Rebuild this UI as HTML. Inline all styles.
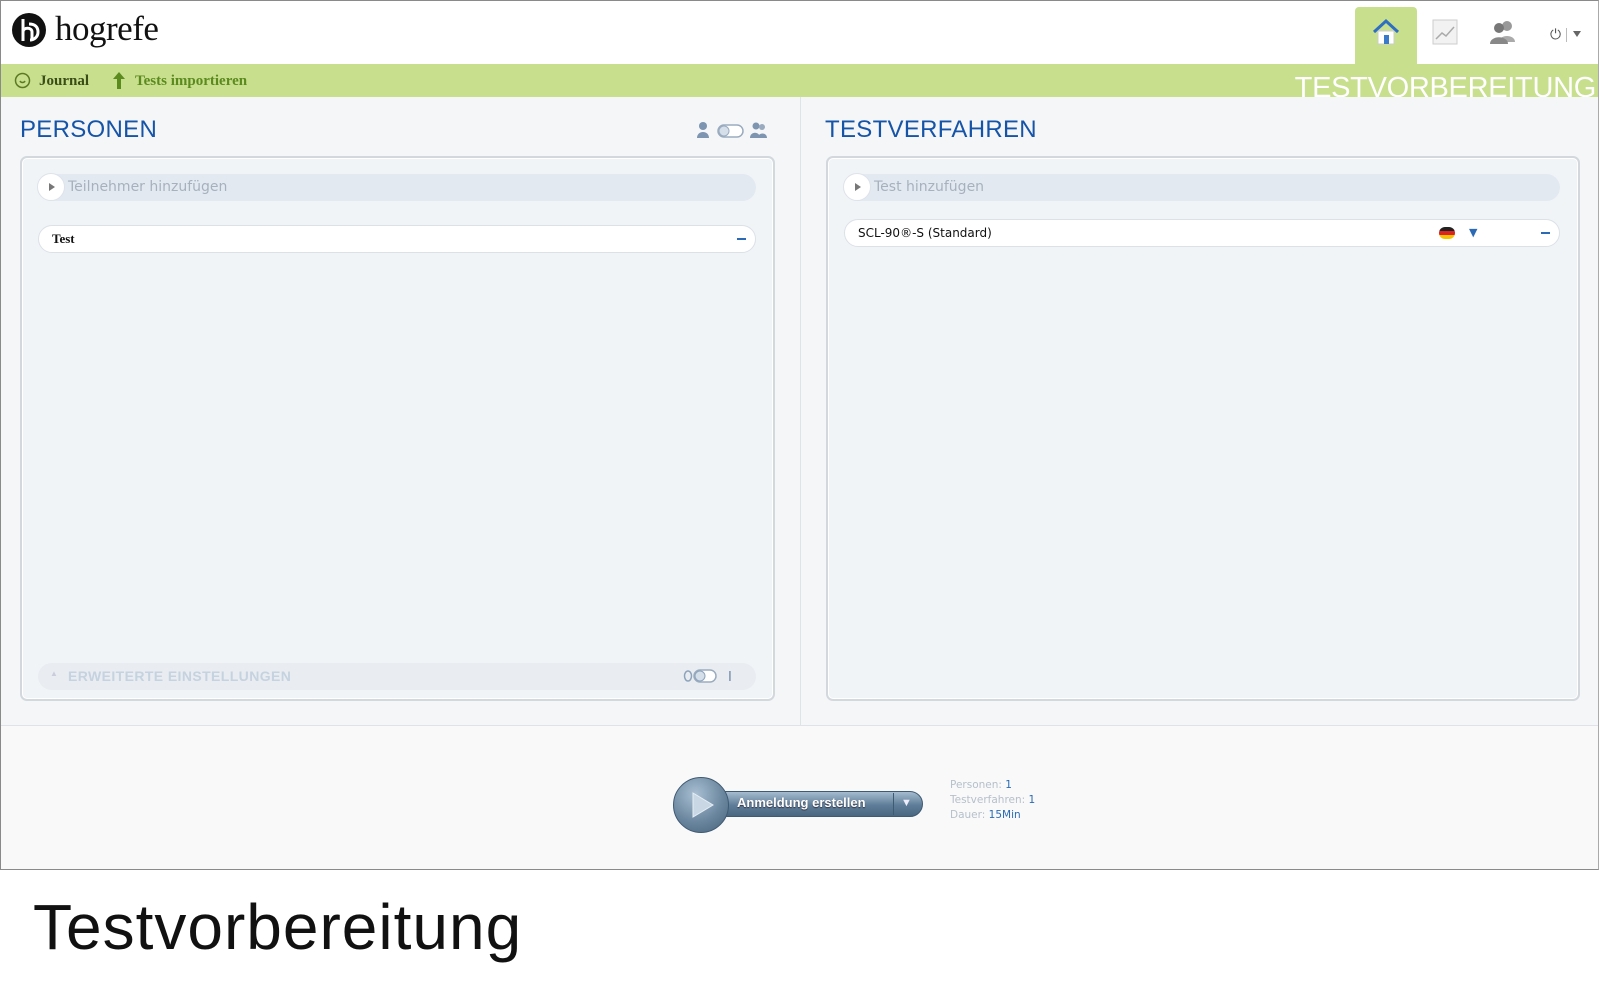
<!DOCTYPE html>
<html><head><meta charset="utf-8"><style>
*{margin:0;padding:0;box-sizing:border-box}
body{width:1599px;height:990px;background:#fff;font-family:"Liberation Sans",sans-serif;position:relative;overflow:hidden}
.a{position:absolute}
.frame{left:0;top:0;width:1599px;height:870px;border:1px solid #8a8a8a;border-right-color:#aaa;background:#f4f6f8}
.hdr{left:1px;top:1px;width:1597px;height:63px;background:#fff}
.bar{left:1px;top:64px;width:1597px;height:33px;background:#c8df8e;overflow:hidden}
.pbox{border:2px solid #d3d8dd;border-radius:7px;background:#f1f4f7;box-shadow:inset 0 0 0 1px #fff}
.add{height:27px;border-radius:14px;background:#e2e9f1;color:#a7b1bd;font-family:"DejaVu Sans",sans-serif;font-size:14px;line-height:27px;padding-left:30px}
.add .c{position:absolute;left:-1px;top:-1px;width:28px;height:28px;border-radius:50%;background:#fff;border:1px solid #dde3ea}
.add .c:after{content:"";position:absolute;left:11px;top:9px;border-left:6px solid #777;border-top:4px solid transparent;border-bottom:4px solid transparent}
.row{height:28px;border-radius:14px;background:#fff;border:1px solid #dbe1e7;font-size:13px;line-height:26px;padding-left:13px;color:#111}
.minus{position:absolute;right:9px;top:12px;width:9px;height:2px;background:#2b6bb5}
h2{position:absolute;font-weight:normal;font-size:24px;color:#1654a8;letter-spacing:.3px}
</style></head><body>
<div class="a frame"></div>
<div class="a hdr"></div>
<svg class="a" style="left:11px;top:12px" width="36" height="36" viewBox="0 0 36 36"><circle cx="18" cy="18" r="17" fill="#111"/><path d="M12 7v22M12 20c0-5 9-5 9 0v9M18 12c6 0 9 3 9 8s-4 8-8 8" stroke="#fff" stroke-width="3" fill="none"/></svg>
<div class="a" style="left:55px;top:9px;font-family:'Liberation Serif',serif;font-size:35px;color:#111;letter-spacing:-.5px">hogrefe</div>
<div class="a" style="left:1355px;top:7px;width:62px;height:58px;background:#c8df8e;border-radius:4px 4px 0 0"></div>
<svg class="a" style="left:1371px;top:18px" width="30" height="28" viewBox="0 0 30 28"><path d="M3 14L15 3l12 11" stroke="#2e6fc2" stroke-width="3" fill="none"/><rect x="7" y="13" width="16" height="13" fill="#fff" stroke="#ccc"/><rect x="13" y="17" width="5" height="9" fill="#3a7ac8"/></svg>
<svg class="a" style="left:1431px;top:18px" width="28" height="28" viewBox="0 0 28 28"><rect x="2" y="2" width="24" height="24" fill="#f2f2f2" stroke="#ccc"/><path d="M5 21l6-6 4 3 8-9" stroke="#aaa" stroke-width="1.5" fill="none"/></svg>
<svg class="a" style="left:1488px;top:18px" width="30" height="28" viewBox="0 0 30 28"><circle cx="19" cy="8" r="5" fill="#999"/><path d="M11 24c0-8 16-8 16 0z" fill="#aaa"/><circle cx="11" cy="10" r="5" fill="#777"/><path d="M2 26c0-9 18-9 18 0z" fill="#888"/></svg>
<div class="a" style="left:1550px;top:26px;font-size:14px;color:#555">⏻</div>
<div class="a" style="left:1566px;top:28px;width:1px;height:14px;background:#bbb"></div>
<div class="a" style="left:1573px;top:31px;border-top:6px solid #666;border-left:4px solid transparent;border-right:4px solid transparent"></div>
<div class="a bar">
 <svg class="a" style="left:13px;top:8px" width="17" height="17" viewBox="0 0 17 17"><circle cx="8.5" cy="8.5" r="7" stroke="#5b7a22" stroke-width="1.5" fill="none"/><path d="M6 9c1 2 4 2 5 0" stroke="#5b7a22" stroke-width="1.5" fill="none"/></svg>
 <div class="a" style="left:38px;top:9px;font-family:'Liberation Serif',serif;font-weight:bold;font-size:15px;color:#3b4d16">Journal</div>
 <svg class="a" style="left:111px;top:7px" width="14" height="19" viewBox="0 0 14 19"><path d="M7 1L1 8h4v10h4V8h4z" fill="#5b8a1e"/></svg>
 <div class="a" style="left:134px;top:9px;font-family:'Liberation Serif',serif;font-weight:bold;font-size:15px;color:#5b8a1e">Tests importieren</div>
 <div class="a" style="right:2px;top:8px;font-size:29px;color:#fff;letter-spacing:-.3px">TESTVORBEREITUNG</div>
</div>
<div class="a" style="left:800px;top:97px;width:1px;height:628px;background:#dfe3e8"></div>
<div class="a" style="left:1px;top:725px;width:1597px;height:144px;background:#f9f9f9;border-top:1px solid #dfe3e8"></div>
<h2 style="left:20px;top:116px">PERSONEN</h2>
<svg class="a" style="left:696px;top:121px" width="74" height="18" viewBox="0 0 74 18"><circle cx="7" cy="5" r="4" fill="#7d95b0"/><path d="M1 17c0-8 12-8 12 0z" fill="#7d95b0"/><rect x="22" y="4" width="25" height="12" rx="6" fill="#fff" stroke="#9aabbf" stroke-width="1.5"/><circle cx="28" cy="10" r="5" fill="#d5dfea" stroke="#9aabbf"/><circle cx="60" cy="5" r="3.5" fill="#7d95b0"/><circle cx="66" cy="6" r="3" fill="#9aabbf"/><path d="M54 17c0-7 10-7 10 0zM62 17c0-6 9-6 9 0z" fill="#7d95b0"/></svg>
<div class="a pbox" style="left:20px;top:156px;width:755px;height:545px"></div>
<div class="a add" style="left:38px;top:174px;width:718px"><span class="c"></span>Teilnehmer hinzufügen</div>
<div class="a row" style="left:38px;top:225px;width:718px;font-weight:bold;font-family:'Liberation Serif',serif">Test<span class="minus"></span></div>
<div class="a add" style="left:38px;top:663px;width:718px;color:#c5d2df;font-weight:bold;font-size:14px;letter-spacing:.4px;background:#e9edf1;font-family:'Liberation Sans',sans-serif">ERWEITERTE EINSTELLUNGEN<span class="a" style="left:12px;top:-3px;font-size:8px;color:#ccd">▲</span></div>
<svg class="a" style="left:683px;top:668px" width="50" height="16" viewBox="0 0 50 16"><ellipse cx="5" cy="8" rx="3.5" ry="5" stroke="#8ea3bb" stroke-width="1.5" fill="none"/><rect x="11" y="2" width="22" height="12" rx="6" fill="#fff" stroke="#9aabbf" stroke-width="1.5"/><circle cx="17" cy="8" r="5" fill="#d5dfea" stroke="#8ea3bb"/><rect x="46" y="3" width="1.8" height="10" fill="#8ea3bb"/></svg>
<h2 style="left:825px;top:116px">TESTVERFAHREN</h2>
<div class="a pbox" style="left:826px;top:156px;width:754px;height:545px"></div>
<div class="a add" style="left:844px;top:174px;width:716px"><span class="c"></span>Test hinzufügen</div>
<div class="a row" style="left:844px;top:219px;width:716px;font-family:'DejaVu Sans',sans-serif;font-size:12px">SCL-90®-S (Standard)<span class="minus"></span>
 <span class="a" style="left:594px;top:7px;width:16px;height:12px;border-radius:6px;background:linear-gradient(#222 33%,#d22 33% 66%,#f5c400 66%)"></span>
 <span class="a" style="left:624px;top:0;color:#2b6bb5;font-size:11px">▼</span></div>
<div class="a" style="left:712px;top:791px;width:211px;height:26px;border-radius:13px;background:linear-gradient(#a6bccf,#5f7d98 55%,#4a6782);border:1px solid #3f5a73"></div>
<div class="a" style="left:737px;top:795px;color:#fff;font-weight:bold;font-size:13px;text-shadow:0 1px 1px #334">Anmeldung erstellen</div>
<div class="a" style="left:893px;top:793px;width:1px;height:22px;background:#3f5a73"></div>
<div class="a" style="left:901px;top:797px;color:#eef;font-size:11px">▼</div>
<div class="a" style="left:673px;top:777px;width:56px;height:56px;border-radius:50%;background:radial-gradient(circle at 40% 30%,#a9bfd2,#6b879f 55%,#46627b);border:1px solid #3f5a73"></div>
<svg class="a" style="left:690px;top:791px" width="26" height="28" viewBox="0 0 26 28"><path d="M3 2L23 14 3 26z" fill="#c9d7e4" stroke="#e6eef5"/></svg>
<div class="a" style="left:950px;top:778px;font-family:'DejaVu Sans',sans-serif;font-size:10.5px;line-height:15px;color:#b6c0cb">Personen: <b style="color:#2b6bb5;font-weight:normal">1</b><br>Testverfahren: <b style="color:#2b6bb5;font-weight:normal">1</b><br>Dauer: <b style="color:#2b6bb5;font-weight:normal">15Min</b></div>
<div class="a" style="left:33px;top:890px;font-size:64px;color:#111;letter-spacing:1px;font-weight:normal">Testvorbereitung</div>
</body></html>
